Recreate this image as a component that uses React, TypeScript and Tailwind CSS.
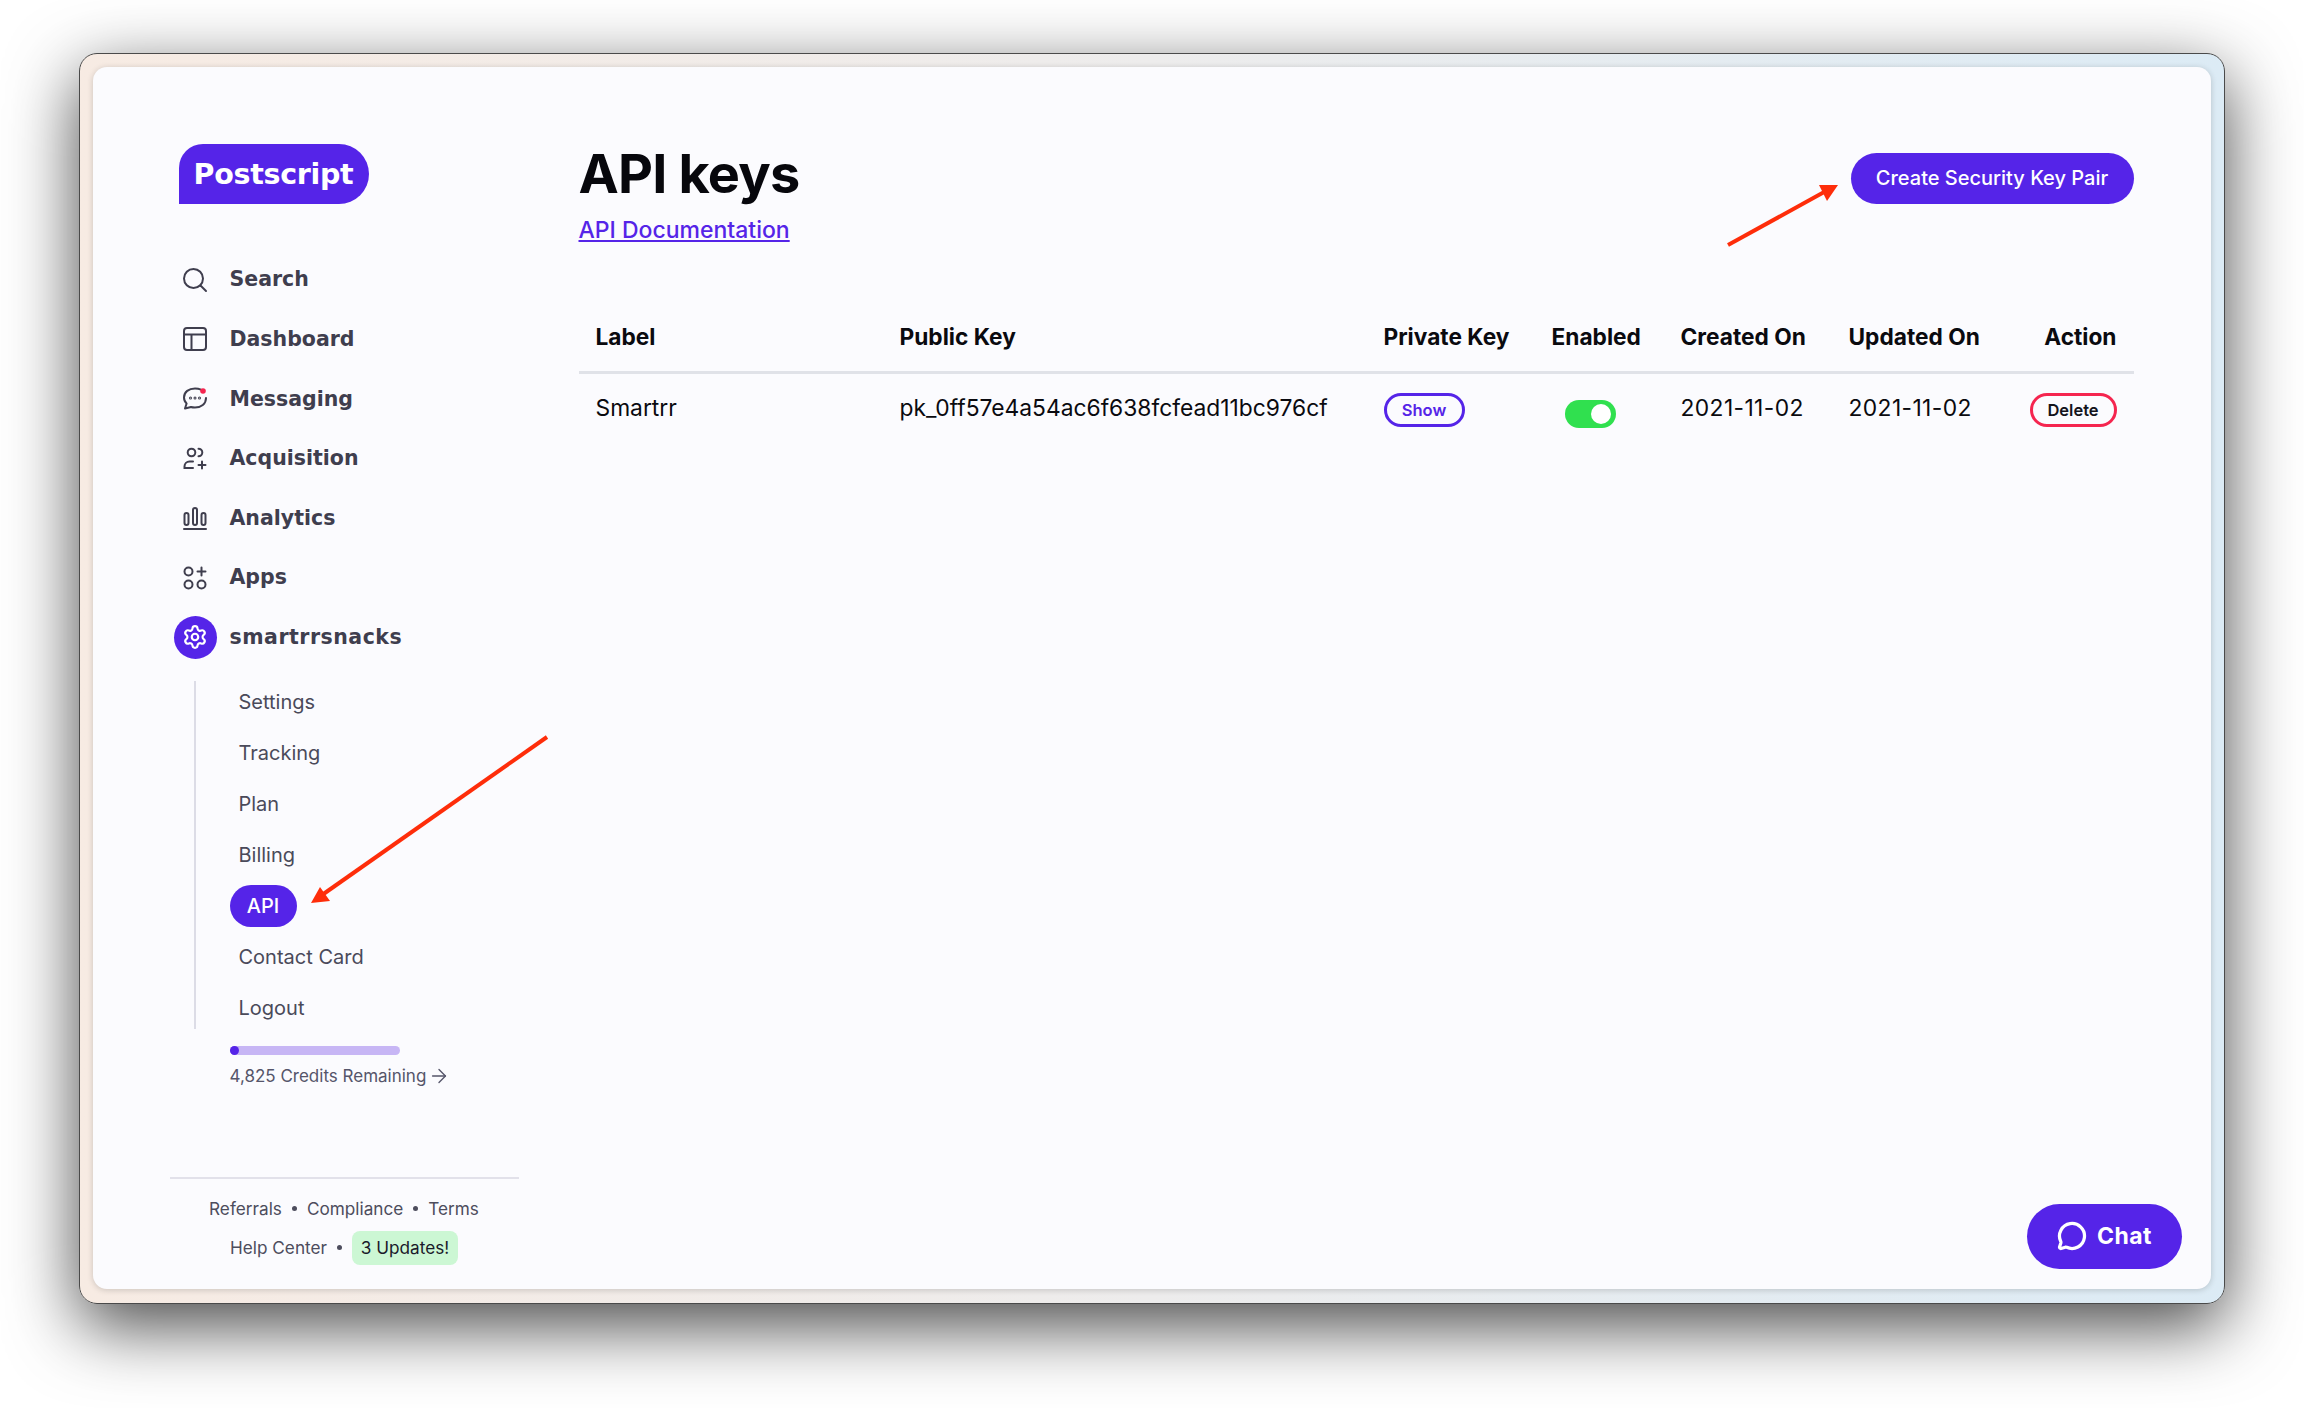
import React from 'react';
import { ArrowRight, MessageCircle, Settings } from 'lucide-react';

const navFont = "font-['DejaVu_Sans',sans-serif]";

function SearchIcon() {
  return (
    <svg width="26" height="26" viewBox="0 0 26 26" fill="none" stroke="currentColor" strokeWidth="2" strokeLinecap="round">
      <circle cx="11.5" cy="11.5" r="9.5" />
      <path d="M18.5 18.5 24 24" />
    </svg>
  );
}

function DashboardIcon() {
  return (
    <svg width="26" height="26" viewBox="0 0 26 26" fill="none" stroke="currentColor" strokeWidth="2">
      <rect x="2" y="2" width="22" height="22" rx="3" />
      <path d="M2 8.5h22M9.5 8.5V24" />
    </svg>
  );
}

function MessagingIcon() {
  return (
    <svg width="26" height="26" viewBox="0 0 26 26" fill="none" stroke="currentColor" strokeWidth="2" strokeLinecap="round" strokeLinejoin="round">
      <path d="M19 3.6C17.3 2.9 15.3 2.5 13 2.5 6.8 2.5 2 5.9 2 11.5c0 2.5 1 4.6 2.6 6L3 22.5l6-1.5c1.2.4 2.600.5 4 .5 6.200 0 11-3.500 11-9.500" />
      <circle cx="8.500" cy="12" r="0.500" />
      <circle cx="13" cy="12" r="0.500" />
      <circle cx="17.500" cy="12" r="0.500" />
      <circle cx="21" cy="5" r="2.800" fill="#f5254f" stroke="none" />
    </svg>
  );
}

function AcquisitionIcon() {
  return (
    <svg width="26" height="26" viewBox="0 0 26 26" fill="none" stroke="currentColor" strokeWidth="2" strokeLinecap="round">
      <circle cx="9.500" cy="6.500" r="3.800" />
      <path d="M16.500 2.700a3.800 3.800 0 0 1 0 7.600" />
      <path d="M11 15.500H7.500A5 5 0 0 0 2.500 20.500v1.500H11" />
      <path d="M20 15.500v7M16.500 19h7" />
    </svg>
  );
}

function AnalyticsIcon() {
  return (
    <svg width="26" height="26" viewBox="0 0 26 26" fill="none" stroke="currentColor" strokeWidth="2" strokeLinecap="round">
      <rect x="2.500" y="8" width="4" height="12" rx="2" />
      <rect x="11" y="3" width="4" height="17" rx="2" />
      <rect x="19.500" y="8" width="4" height="12" rx="2" />
      <path d="M2 24h22" />
    </svg>
  );
}

function AppsIcon() {
  return (
    <svg width="26" height="26" viewBox="0 0 26 26" fill="none" stroke="currentColor" strokeWidth="2" strokeLinecap="round">
      <circle cx="6.500" cy="6.500" r="4" />
      <circle cx="6.500" cy="19.500" r="4" />
      <circle cx="19.500" cy="19.500" r="4" />
      <path d="M19.500 2.500v8M15.500 6.500h8" />
    </svg>
  );
}

const NAV_ITEMS = [
  { label: 'Search', icon: <SearchIcon /> },
  { label: 'Dashboard', icon: <DashboardIcon /> },
  { label: 'Messaging', icon: <MessagingIcon /> },
  { label: 'Acquisition', icon: <AcquisitionIcon /> },
  { label: 'Analytics', icon: <AnalyticsIcon /> },
  { label: 'Apps', icon: <AppsIcon /> },
];

const SUB_ITEMS = ['Settings', 'Tracking', 'Plan', 'Billing', 'API', 'Contact Card', 'Logout'];

function Sidebar() {
  return (
    <aside className="w-[486px] shrink-0 flex flex-col pt-[77px] pl-[77px] pr-[60px] pb-[24px]">
      <div className={`ml-[9px] w-[190px] h-[60px] pt-[3px] flex items-center justify-center bg-[#5524e8] text-white text-[28.500px] font-bold tracking-[-0.300px] rounded-tl-[24px] rounded-tr-[30px] rounded-br-[30px] ${navFont}`}>
        Postscript
      </div>

      <nav className="mt-[46.500px] ml-[4px]">
        {NAV_ITEMS.map((item) => (
          <div key={item.label} className="h-[59.6px] flex items-center text-[#3f3e4e]">
            <div className="w-[43px] flex justify-center">{item.icon}</div>
            <span className={`ml-[13px] text-[20.500px] font-bold ${navFont}`}>{item.label}</span>
          </div>
        ))}
        <div className="h-[59.6px] flex items-center text-[#3f3e4e]">
          <div className="w-[43px] h-[43px] rounded-full bg-[#5524e8] flex items-center justify-center text-white">
            <Settings size={26} strokeWidth={2} />
          </div>
          <span className={`ml-[13px] text-[20.500px] font-bold tracking-[0.500px] ${navFont}`}>smartrrsnacks</span>
        </div>

        <div className="mt-[13.500px] ml-[20px] border-l-2 border-[#dcdce6] flex flex-col gap-[9px]">
          {SUB_ITEMS.map((item) => (
            <div key={item} className="h-[42px] flex items-center text-[20px] text-[#4a4a5a]">
              {item === 'API' ? (
                <span className="ml-[34px] w-[67px] h-[42px] rounded-full bg-[#5524e8] text-white font-medium flex items-center justify-center">
                  {item}
                </span>
              ) : (
                <span className="ml-[43px]">{item}</span>
              )}
            </div>
          ))}
        </div>

        <div className="mt-[17px] ml-[56px] w-[170px] h-[9px] rounded-full bg-[#c7b6f5]">
          <div className="w-[9px] h-[9px] rounded-full bg-[#5524e8]" />
        </div>
        <div className="mt-[8px] ml-[56px] flex items-center gap-[2px] text-[17px] leading-[26px] text-[#55556a]">
          4,825 Credits Remaining
          <ArrowRight size={22} strokeWidth={1.500} />
        </div>
      </nav>

      <div className="mt-auto border-t-2 border-[#e2e1ea] pt-[17px] flex flex-col items-center text-[17.200px] text-[#4d4d5d]">
        <div className="h-[26px] flex items-center">
          <span>Referrals</span>
          <span className="mx-[10px] w-[5px] h-[5px] rounded-full bg-[#4d4d5d]" />
          <span>Compliance</span>
          <span className="mx-[10px] w-[5px] h-[5px] rounded-full bg-[#4d4d5d]" />
          <span>Terms</span>
        </div>
        <div className="mt-[9px] flex items-center">
          <span>Help Center</span>
          <span className="mx-[10px] w-[5px] h-[5px] rounded-full bg-[#4d4d5d]" />
          <span className="w-[106px] h-[34px] rounded-[8px] bg-[#ccf7d4] text-[#1a1a2a] flex items-center justify-center">
            3 Updates!
          </span>
        </div>
      </div>
    </aside>
  );
}

function KeysTable() {
  return (
    <table className="mt-[77px] w-full table-fixed text-left text-[22.800px] text-[#0a0a0f]">
      <colgroup>
        <col className="w-[304px]" />
        <col className="w-[484px]" />
        <col className="w-[168px]" />
        <col className="w-[129px]" />
        <col className="w-[168px]" />
        <col className="w-[160px]" />
        <col />
      </colgroup>
      <thead>
        <tr className="border-b-[3px] border-[#e0e2e8] text-[22.700px] leading-[30px]">
          <th className="pl-[17px] pb-[19px] font-bold">Label</th>
          <th className="pl-[17px] pb-[19px] font-bold">Public Key</th>
          <th className="pl-[17px] pb-[19px] font-bold">Private Key</th>
          <th className="pl-[17px] pb-[19px] font-bold">Enabled</th>
          <th className="pl-[17px] pb-[19px] font-bold">Created On</th>
          <th className="pl-[17px] pb-[19px] font-bold">Updated On</th>
          <th className="pr-[17px] pb-[19px] font-bold text-right">Action</th>
        </tr>
      </thead>
      <tbody>
        <tr className="align-top leading-[30px]">
          <td className="pl-[17px] pt-[19px]">Smartrr</td>
          <td className="pl-[17px] pt-[19px] whitespace-nowrap">pk_0ff57e4a54ac6f638fcfead11bc976cf</td>
          <td className="pl-[17px] pt-[19px]">
            <button className="w-[81px] h-[34px] rounded-full border-[3px] border-[#5524e8] text-[#5524e8] text-[16.500px] font-semibold leading-none">
              Show
            </button>
          </td>
          <td className="pl-[30px] pt-[26px]">
            <div className="w-[51px] h-[28px] rounded-full bg-[#30e04f] flex items-center justify-end pr-[5px]">
              <div className="w-[20px] h-[20px] rounded-full bg-white" />
            </div>
          </td>
          <td className="pl-[17px] pt-[19px] whitespace-nowrap tracking-[0.400px]">2021-11-02</td>
          <td className="pl-[17px] pt-[19px] whitespace-nowrap tracking-[0.400px]">2021-11-02</td>
          <td className="pr-[17px] pt-[19px] text-right">
            <button className="w-[87px] h-[34px] rounded-full border-[3px] border-[#f5254f] text-[#14141c] text-[16.500px] font-semibold leading-none">
              Delete
            </button>
          </td>
        </tr>
      </tbody>
    </table>
  );
}

function Annotations() {
  return (
    <svg className="absolute inset-0 pointer-events-none" width="2304" height="1408" viewBox="0 0 2304 1408" fill="none">
      <path d="M1728 245 1826 191" stroke="#fe2d0a" strokeWidth="4" />
      <path d="M1838 185 1819 185 1827 201Z" fill="#fe2d0a" />
      <path d="M547 737 322 895" stroke="#fe2d0a" strokeWidth="4" />
      <path d="M311 903 320 887 330 901Z" fill="#fe2d0a" />
    </svg>
  );
}

export default function App() {
  return (
    <div className="relative w-[2304px] h-[1408px] overflow-hidden bg-white font-['Inter',sans-serif]">
      <div className="absolute left-[79px] top-[53px] w-[2146px] h-[1251px] pl-[12.500px] pt-[12.500px] pr-[13.500px] pb-[14.500px] rounded-[18px] border-[1.500px] border-[#4a4a4a] bg-gradient-to-r from-[#f7ebe3] via-[#edecec] to-[#dcebf5] shadow-[0_22px_70px_rgba(0,0,0,0.72)]">
        <div className="relative w-full h-full rounded-[14px] bg-[#fbfbfe] flex shadow-[0_1px_6px_rgba(0,0,0,0.18)]">
          <Sidebar />
          <main className="flex-1 min-w-0 pt-[77px] pr-[77px]">
            <div className="flex justify-between items-start">
              <div>
                <h1 className="text-[54px] leading-[60px] font-bold tracking-[-0.800px] text-[#07070c]">API keys</h1>
                <a className="block mt-[11px] text-[23px] leading-[30px] font-medium text-[#5524e8] underline">
                  API Documentation
                </a>
              </div>
              <button className="mt-[9px] w-[283px] h-[51px] rounded-full bg-[#5524e8] text-white text-[20px] font-medium">
                Create Security Key Pair
              </button>
            </div>
            <KeysTable />
          </main>
          <button className="absolute right-[28.500px] bottom-[20px] w-[155px] h-[65px] rounded-full bg-[#5524e8] text-white flex items-center justify-center gap-[10px] text-[23px] font-bold tracking-[0.5px]">
            <MessageCircle size={30} strokeWidth={2.600} />
            Chat
          </button>
        </div>
      </div>
      <Annotations />
    </div>
  );
}
